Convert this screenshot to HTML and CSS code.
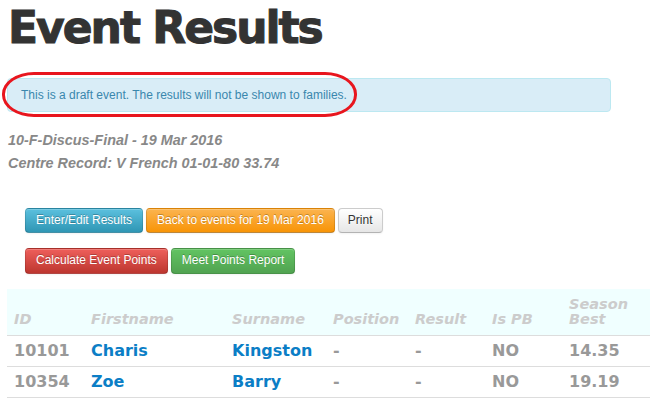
FILE: index.html
```html
<!DOCTYPE html>
<html>
<head>
<meta charset="utf-8">
<title>Event Results</title>
<link rel="stylesheet" href="styles.css">
</head>
<body>
<div class="page">
  <h1 class="title">Event Results</h1>
  <div class="alert-wrap">
    <div class="alert">This is a draft event. The results will not be shown to families.</div>
    <div class="annot"></div>
  </div>
  <div class="meta">
    <div>10-F-Discus-Final - 19 Mar 2016</div>
    <div>Centre Record: V French 01-01-80 33.74</div>
  </div>
  <div class="actions">
    <div class="btn-row">
      <a class="btn btn-info">Enter/Edit Results</a>
      <a class="btn btn-warning">Back to events for 19 Mar 2016</a>
      <a class="btn btn-default">Print</a>
    </div>
    <div class="btn-row">
      <a class="btn btn-danger">Calculate Event Points</a>
      <a class="btn btn-success">Meet Points Report</a>
    </div>
  </div>
  <table class="results">
    <colgroup>
      <col class="c-id"><col class="c-first"><col class="c-sur"><col class="c-pos"><col class="c-res"><col class="c-pb"><col class="c-sb">
    </colgroup>
    <thead>
      <tr>
        <th>ID</th><th>Firstname</th><th>Surname</th><th>Position</th><th>Result</th><th>Is PB</th><th>Season<br>Best</th>
      </tr>
    </thead>
    <tbody>
      <tr>
        <td>10101</td><td class="name">Charis</td><td class="name">Kingston</td><td>-</td><td>-</td><td>NO</td><td>14.35</td>
      </tr>
      <tr>
        <td>10354</td><td class="name">Zoe</td><td class="name">Barry</td><td>-</td><td>-</td><td>NO</td><td>19.19</td>
      </tr>
    </tbody>
  </table>
</div>
</body>
</html>
```

FILE: styles.css
```css
html, body {
  margin: 0;
  padding: 0;
  background: #fff;
}
body {
  font-family: "Liberation Sans", Arial, sans-serif;
  color: #333;
}
.page {
  padding-left: 7px;
  padding-right: 1px;
}
.title {
  margin: 4px 0 0 1px;
  font-family: "DejaVu Sans", Verdana, sans-serif;
  font-weight: bold;
  font-size: 44px;
  line-height: 48px;
  letter-spacing: -2px;
  color: #333;
  -webkit-text-stroke: 1px #333;
}
.alert-wrap {
  position: relative;
  width: 604px;
  margin-top: 26px;
}
.alert {
  box-sizing: border-box;
  width: 604px;
  height: 34px;
  padding: 7px 12px 6px 13px;
  background: #d9edf7;
  border: 1px solid #bce8f1;
  border-radius: 4px;
  color: #3a87ad;
  font-size: 12px;
  line-height: 18px;
}
.annot {
  position: absolute;
  left: -5px;
  top: -6px;
  width: 349px;
  height: 39px;
  border: 3.5px solid #e8161e;
  border-radius: 32px / 22px;
}
.meta {
  margin-top: 17px;
  margin-left: 1px;
  font-weight: bold;
  font-style: italic;
  font-size: 14.4px;
  line-height: 23px;
  color: #888;
}
.actions {
  margin: 33px 0 0 18px;
  display: flex;
  flex-direction: column;
  gap: 15px;
}
.btn-row {
  display: flex;
  gap: 3px;
}
.btn {
  display: inline-block;
  padding: 4px 10px;
  font-size: 12px;
  line-height: 15px;
  border: 1px solid rgba(0,0,0,0.12);
  border-bottom-color: rgba(0,0,0,0.25);
  border-radius: 4px;
  color: #fff;
  text-shadow: 0 -1px 0 rgba(0,0,0,0.25);
  box-shadow: inset 0 1px 0 rgba(255,255,255,0.2), 0 1px 2px rgba(0,0,0,0.05);
  cursor: pointer;
}
.btn-row:last-child .btn {
  padding-bottom: 5px;
}
.btn-info { background: linear-gradient(#5bc0de, #2f96b4); }
.btn-warning { background: linear-gradient(#fbb450, #f89406); }
.btn-danger { background: linear-gradient(#ee5f5b, #bd362f); }
.btn-success { background: linear-gradient(#62c462, #51a351); }
.btn-default {
  padding: 4px 9px;
  background: linear-gradient(#ffffff, #e6e6e6);
  color: #333;
  text-shadow: 0 1px 1px rgba(255,255,255,0.75);
  border-color: #ccc #ccc #b3b3b3;
}
.results {
  margin-top: 15px;
  width: 643px;
  border-collapse: collapse;
  table-layout: fixed;
  font-family: "DejaVu Sans", Verdana, sans-serif;
  font-weight: bold;
}
.c-id { width: 77px; }
.c-first { width: 141px; }
.c-sur { width: 101px; }
.c-pos { width: 82px; }
.c-res { width: 77px; }
.c-pb { width: 77px; }
.c-sb { width: 88px; }
.results thead tr {
  background: #f0ffff;
}
.results th {
  text-align: left;
  vertical-align: bottom;
  font-style: italic;
  font-size: 14.5px;
  line-height: 15px;
  color: #cccccc;
  padding: 8px 7px 8px;
  border-bottom: 1px solid #dddddd;
}
.results td {
  font-size: 16px;
  line-height: 20px;
  color: #999;
  padding: 5px 7px 5px;
  border-bottom: 1px solid #dddddd;
  white-space: nowrap;
}
.results td.name {
  color: #0b7ec6;
}
```
